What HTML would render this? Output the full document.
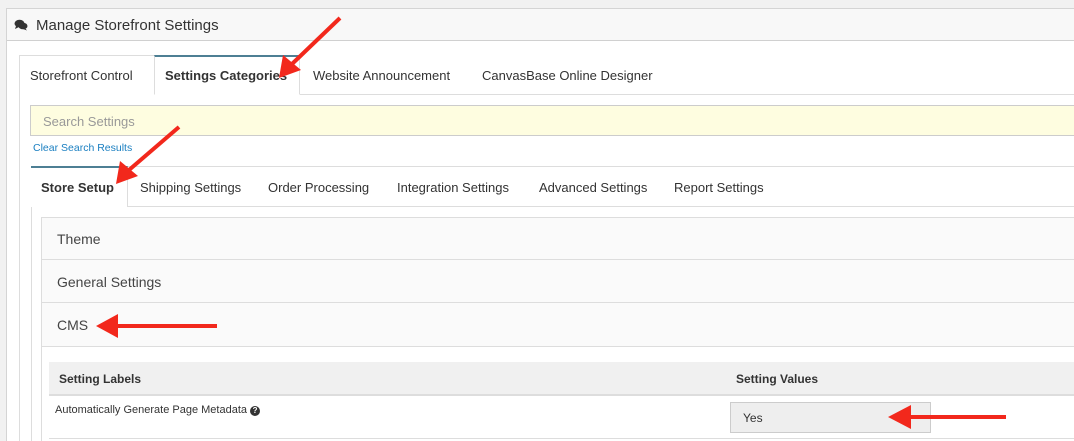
<!DOCTYPE html>
<html><head><style>
*{box-sizing:border-box;margin:0;padding:0}
html,body{width:1074px;height:441px;overflow:hidden}
body{background:#f1f1f1;font-family:"Liberation Sans",sans-serif;color:#333;position:relative}
.a{position:absolute}
.t{font-size:13px;color:#333;white-space:nowrap}
</style></head><body>
<div class="a" style="left:6px;top:8px;width:1068px;height:433px;border-left:1px solid #d4d4d4;border-top:1px solid #d4d4d4;background:#fff"></div>
<div class="a" style="left:7px;top:9px;width:1067px;height:32px;background:#f8f8f8;border-bottom:1px solid #d0d0d0"></div>
<svg class="a" style="left:14px;top:19px" width="14" height="12" viewBox="0 0 14 12"><ellipse cx="5.5" cy="4.5" rx="5" ry="3.8" fill="#333"/><path d="M2 7 L1 10 L5 8Z" fill="#333"/><ellipse cx="9" cy="7" rx="4.5" ry="3.3" fill="#333"/><path d="M11 9 L13 11.5 L9 10Z" fill="#333"/></svg>
<div class="a" style="left:36px;top:17px;font-size:15px;color:#333">Manage Storefront Settings</div>
<div class="a" style="left:19px;top:94px;width:1055px;height:347px;border-left:1px solid #ddd;border-top:1px solid #ddd"></div>
<div class="a" style="left:19px;top:55px;width:136px;height:40px;border:1px solid #ddd;border-bottom:none;background:#fff"></div>
<div class="a t" style="left:30px;top:68px">Storefront Control</div>
<div class="a" style="left:154px;top:55px;width:146px;height:40px;border:1px solid #ddd;border-top:2px solid #4d7f94;border-bottom:1px solid #fff;background:#fff"></div>
<div class="a t" style="left:165px;top:68px;font-weight:bold">Settings Categories</div>
<div class="a t" style="left:313px;top:68px">Website Announcement</div>
<div class="a t" style="left:482px;top:68px">CanvasBase Online Designer</div>
<div class="a" style="left:30px;top:105px;width:1044px;height:31px;background:#fefde0;border:1px solid #ccc;border-right:none"></div>
<div class="a" style="left:43px;top:114px;font-size:13px;color:#999">Search Settings</div>
<div class="a" style="left:33px;top:142px;font-size:10.5px;color:#1a7fc1">Clear Search Results</div>
<div class="a" style="left:31px;top:206px;width:1043px;height:235px;border-left:1px solid #ddd;border-top:1px solid #ddd"></div>
<div class="a" style="left:31px;top:166px;width:1043px;height:1px;background:#ddd"></div>
<div class="a" style="left:31px;top:166px;width:97px;height:41px;border-right:1px solid #ddd;border-top:2px solid #4d7f94;background:#fff"></div>
<div class="a t" style="left:41px;top:180px;font-weight:bold">Store Setup</div>
<div class="a t" style="left:140px;top:180px">Shipping Settings</div>
<div class="a t" style="left:268px;top:180px">Order Processing</div>
<div class="a t" style="left:397px;top:180px">Integration Settings</div>
<div class="a t" style="left:539px;top:180px">Advanced Settings</div>
<div class="a t" style="left:674px;top:180px">Report Settings</div>
<div class="a" style="left:41px;top:217px;width:1033px;height:43px;background:#fafafa;border:1px solid #ddd;border-right:none"></div>
<div class="a" style="left:57px;top:231px;font-size:14px;color:#444">Theme</div>
<div class="a" style="left:41px;top:260px;width:1033px;height:43px;background:#fafafa;border-left:1px solid #ddd;border-bottom:1px solid #ddd"></div>
<div class="a" style="left:57px;top:274px;font-size:14px;color:#444">General Settings</div>
<div class="a" style="left:41px;top:303px;width:1033px;height:44px;background:#fafafa;border-left:1px solid #ddd;border-bottom:1px solid #ddd"></div>
<div class="a" style="left:57px;top:317px;font-size:14px;color:#444">CMS</div>
<div class="a" style="left:41px;top:347px;width:1px;height:94px;background:#ddd"></div>
<div class="a" style="left:49px;top:362px;width:1025px;height:34px;background:#f0f0f0;border-bottom:2px solid #ddd"></div>
<div class="a" style="left:59px;top:372px;font-size:12px;font-weight:bold;color:#333">Setting Labels</div>
<div class="a" style="left:736px;top:372px;font-size:12px;font-weight:bold;color:#333">Setting Values</div>
<div class="a" style="left:55px;top:404px;font-size:11px;color:#333">Automatically Generate Page Metadata <span style="display:inline-block;width:10px;height:10px;border-radius:50%;background:#333;color:#fff;font-size:8px;line-height:10px;text-align:center;font-weight:bold">?</span></div>
<div class="a" style="left:730px;top:402px;width:201px;height:31px;background:#eee;border:1px solid #ccc"></div>
<div class="a" style="left:743px;top:411px;font-size:12px;color:#333">Yes</div>
<div class="a" style="left:49px;top:438px;width:1025px;height:1px;background:#ddd"></div>
<svg class="a" style="left:0;top:0" width="1074" height="441">
<g stroke="#f2281c" stroke-width="4" fill="#f2281c">
<line x1="340" y1="18" x2="292" y2="64"/><polygon points="279,78 283,55 301,70" stroke="none"/>
<line x1="179" y1="127" x2="129" y2="170"/><polygon points="116,184 120,161 138,176" stroke="none"/>
<line x1="217" y1="326" x2="112" y2="326"/><polygon points="96,326 118,314 118,338" stroke="none"/>
<line x1="1006" y1="417" x2="906" y2="417"/><polygon points="888,417 911,405 911,429" stroke="none"/>
</g></svg>
</body></html>
